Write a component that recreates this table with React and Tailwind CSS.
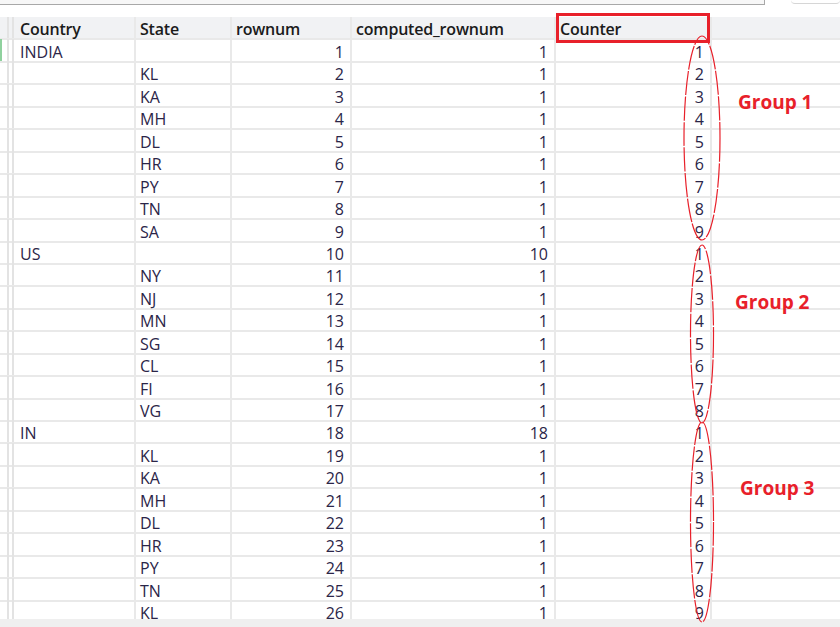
import React from "react";

const groups = [
  { country: "INDIA", states: ["KL", "KA", "MH", "DL", "HR", "PY", "TN", "SA"] },
  { country: "US", states: ["NY", "NJ", "MN", "SG", "CL", "FI", "VG"] },
  { country: "IN", states: ["KL", "KA", "MH", "DL", "HR", "PY", "TN", "KL"] },
];

// flatten groups into grid rows
const buildRows = () => {
  const rows = [];
  let n = 0;
  groups.forEach((g) => {
    n += 1;
    rows.push({ country: g.country, state: "", rownum: n, computed: n, counter: 1 });
    g.states.forEach((s, i) => {
      n += 1;
      rows.push({ country: "", state: s, rownum: n, computed: 1, counter: i + 2 });
    });
  });
  return rows;
};

const rows = buildRows();

const cols = "grid grid-cols-[16px_120px_96px_120px_204px_156px_128px]";
const cell = "border-r-2 border-b-2 border-[#e9e9e9] px-[4px] whitespace-nowrap";

const Gutter = ({ active, header }) => (
  <div className={`relative border-b-2 border-[#e9e9e9] ${header ? "bg-[#f1f2f4]" : ""}`}>
    {active && <div className="absolute left-0 top-0 h-full w-[2px] bg-[#8fd19e]" />}
    <div className="absolute left-[7px] top-0 h-full w-[2px] bg-[#e3e3e3]" />
    <div className="absolute left-[12px] top-0 h-full w-[2px] bg-[#e3e3e3]" />
  </div>
);

const App = () => {
  return (
    <div
      className="relative w-[840px] h-[627px] overflow-hidden bg-white text-[16px]"
      style={{ fontFamily: '"Open Sans", "Noto Sans", sans-serif' }}
    >
      {/* top toolbar remains */}
      <div className="flex h-[17px]">
        <div className="w-[765px] h-[5px] bg-[#f7f7f7] border-b border-r border-[#a8a8a8]" />
        <div className="ml-[26px] w-[49px] h-[4px] rounded-b-full border-b border-[#d6d6d6]" />
      </div>

      {/* header */}
      <div className={`${cols} h-[22px] bg-[#f1f2f4] font-semibold text-[#1b1b1b] leading-[18px] tracking-[-0.2px]`}>
        <Gutter header />
        <div className={`${cell} pt-[3px]`}>Country</div>
        <div className={`${cell} pt-[3px]`}>State</div>
        <div className={`${cell} pt-[3px]`}>rownum</div>
        <div className={`${cell} pt-[3px]`}>computed_rownum</div>
        <div className={`${cell} pt-[3px]`}>Counter</div>
        <div className="border-b-2 border-[#e9e9e9]" />
      </div>

      {/* body */}
      <div className="text-[#2b2548]">
        {rows.map((r, i) => (
          <div key={i} className={`${cols} h-[22.45px] leading-[18px]`}>
            <Gutter active={i === 0} />
            <div className={`${cell} pt-[4px]`}>{r.country}</div>
            <div className={`${cell} pt-[4px]`}>{r.state}</div>
            <div className={`${cell} pt-[4px] text-right pr-[6px]`}>{r.rownum}</div>
            <div className={`${cell} pt-[4px] text-right pr-[6px]`}>{r.computed}</div>
            <div className={`${cell} pt-[4px] text-right pr-[6px]`}>{r.counter}</div>
            <div className="border-b-2 border-[#e9e9e9]" />
          </div>
        ))}
      </div>

      {/* horizontal scrollbar strip */}
      <div className="absolute left-0 bottom-0 w-full h-[8px] bg-[#efefef]" />

      {/* annotations */}
      <div className="absolute left-[556px] top-[13px] w-[154px] h-[30px] border-[3px] border-[#e8202a]" />
      <svg className="absolute left-0 top-0" width="840" height="627" fill="none">
        <g stroke="#e8202a" strokeWidth="1.2" strokeDasharray="24 1.5">
          <ellipse cx="702" cy="138" rx="18" ry="102" />
          <ellipse cx="702" cy="334" rx="11.5" ry="89" />
          <ellipse cx="702" cy="522" rx="11.5" ry="100" />
        </g>
      </svg>
      {[
        ["Group 1", "left-[738px] top-[89px]"],
        ["Group 2", "left-[735px] top-[289px]"],
        ["Group 3", "left-[740px] top-[475px]"],
      ].map(([t, pos]) => (
        <div key={t} className={`absolute ${pos} text-[#e8202a] font-bold text-[19px] leading-[26px]`}>
          {t}
        </div>
      ))}
    </div>
  );
};

export default App;
